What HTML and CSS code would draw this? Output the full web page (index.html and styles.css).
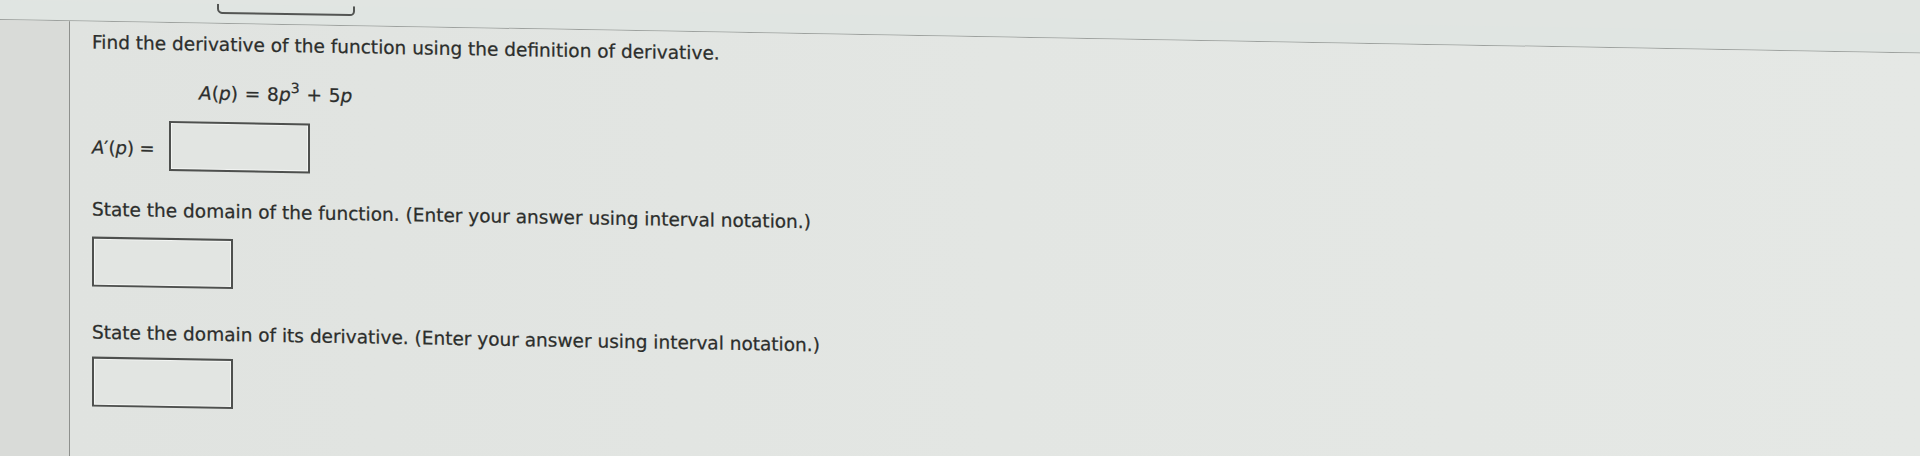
FILE: index.html
```html
<!DOCTYPE html>
<html lang="en">
<head>
  <meta charset="UTF-8">
  <meta name="viewport" content="width=device-width, initial-scale=1.0">
  <title>Derivative question</title>
  <link rel="stylesheet" href="styles.css">
</head>
<body>
  <div class="sheet">
    <!-- Barra superior con el botón cortado -->
    <div class="topbar">
      <div class="top-button"></div>
    </div>

    <div class="frame">
      <aside class="sidebar"></aside>

      <main class="question">
        <p class="prompt prompt-first">Find the derivative of the function using the definition of derivative.</p>

        <p class="equation"><i>A</i>(<i>p</i>) = 8<i>p</i><sup>3</sup> + 5<i>p</i></p>

        <div class="answer-row">
          <span class="answer-label"><i>A</i>′(<i>p</i>) =</span>
          <span class="answer-box"></span>
        </div>

        <p class="prompt prompt-domain">State the domain of the function. (Enter your answer using interval notation.)</p>
        <div class="answer-box"></div>

        <p class="prompt prompt-derivative">State the domain of its derivative. (Enter your answer using interval notation.)</p>
        <div class="answer-box"></div>
      </main>
    </div>
  </div>
</body>
</html>
```

FILE: styles.css
```css
/* Estilos generales */
html, body {
  margin: 0;
  padding: 0;
  height: 456px;
  overflow: hidden;
  background-color: #e1e5e2;
}

body {
  font-family: "DejaVu Sans", Verdana, sans-serif;
  color: #2c2e2c;
  -webkit-text-stroke: 0.25px #2c2e2c;
}

/* La foto de la pantalla esta un poco inclinada */
.sheet {
  transform: skewY(1deg);
  transform-origin: 0 0;
  height: 456px;
  overflow: hidden;
}

/* Barra superior */
.topbar {
  height: 19px;
  background-color: #e0e5e2;
  border-bottom: 1px solid #9da19e;
  overflow: hidden;
}

.top-button {
  margin-left: 217px;
  margin-top: -14px;
  width: 134px;
  height: 20px;
  border: 2px solid #535553;
  border-radius: 5px;
}

/* Columna lateral y pregunta */
.frame {
  display: grid;
  grid-template-columns: 70px 1fr;
  height: 436px;
}

.sidebar {
  background-color: #d9dbd8;
  border-right: 1px solid #8e908d;
}

.question {
  padding-left: 22px;
  background: linear-gradient(90deg, #e0e3e0 0%, #e3e6e3 50%, #e5e8e5 100%);
}

.prompt {
  margin: 0;
  font-size: 18.5px;
  line-height: 22px;
}

.prompt-first {
  margin-top: 10px;
}

.prompt-domain {
  margin: 29px 0 16px;
}

.prompt-derivative {
  margin: 35px 0 13px;
}

.equation {
  margin: 27px 0 17px 107px;
  font-size: 18.5px;
  line-height: 22px;
  word-spacing: 1px;
}

.equation sup {
  font-size: 14px;
  line-height: 0;
  vertical-align: 8px;
}

.answer-row {
  display: flex;
  align-items: center;
  gap: 14px;
}

.answer-label {
  font-size: 18px;
  line-height: 22px;
  margin-top: 5px;
}

.answer-box {
  display: block;
  width: 137px;
  height: 46px;
  border: 2px solid #4e504e;
  box-shadow: inset 0 0 0 1px #f3f5f3;
  background-color: #e2e5e2;
}
```
